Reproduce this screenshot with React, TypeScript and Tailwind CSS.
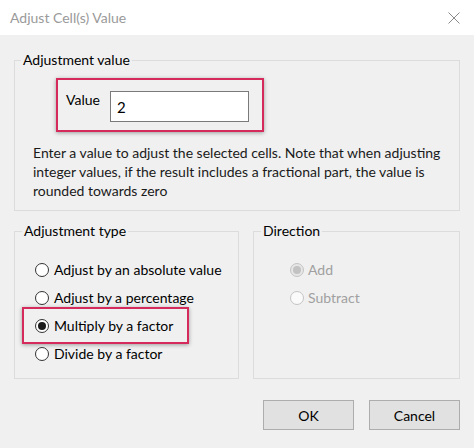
import { useState } from "react";

type Option = { id: string; label: string };

const adjustmentTypes: Option[] = [
  { id: "absolute", label: "Adjust by an absolute value" },
  { id: "percentage", label: "Adjust by a percentage" },
  { id: "multiply", label: "Multiply by a factor" },
  { id: "divide", label: "Divide by a factor" },
];

const directions: Option[] = [
  { id: "add", label: "Add" },
  { id: "subtract", label: "Subtract" },
];

// Classic windows radio button, drawn with plain divs
function Radio({ checked, disabled }: { checked: boolean; disabled?: boolean }) {
  if (disabled) {
    return (
      <span
        className={`flex h-[14px] w-[14px] shrink-0 items-center justify-center rounded-full border border-[#c4c4c4] ${
          checked ? "bg-[#e6e6e6]" : "bg-[#fafafa]"
        }`}
      >
        {checked && <span className="h-[8px] w-[8px] rounded-full bg-[#c2c2c2]" />}
      </span>
    );
  }
  return (
    <span className="flex h-[14px] w-[14px] shrink-0 items-center justify-center rounded-full border border-[#333333] bg-white">
      {checked && <span className="h-[8px] w-[8px] rounded-full bg-[#1a1a1a]" />}
    </span>
  );
}

export default function App() {
  const [value, setValue] = useState("2");
  const [adjustType, setAdjustType] = useState("multiply");
  const direction = "add";

  return (
    <div className="flex h-[448px] w-[474px] flex-col overflow-hidden bg-[#f0f0f0] font-['Lato',sans-serif] text-[14px] text-black">
      {/* Title bar */}
      <div className="flex h-[35px] shrink-0 items-center justify-between bg-white pl-[10px] pr-[14px]">
        <span className="text-[14px] text-[#9a9a9a]">Adjust Cell(s) Value</span>
        <svg width="12" height="12" viewBox="0 0 12 12" className="text-[#8a8a8a]">
          <path d="M0.5 0.5 L11.5 11.5 M11.5 0.5 L0.5 11.5" stroke="currentColor" strokeWidth="1" fill="none" />
        </svg>
      </div>

      <div className="flex flex-col px-[14px] pt-[15px]">
        {/* Adjustment value */}
        <fieldset className="border border-[#dcdcdc] pb-[10px] pl-[18px] pr-[10px]">
          <legend className="ml-[-12px] px-[2px] leading-[20px]">Adjustment value</legend>
          <div className="ml-[23px] mt-[8px] flex h-[54px] w-[208px] items-start border-2 border-[#d42a5c] pl-[8px] pt-[10px] shadow-[0_1px_4px_rgba(0,0,0,0.35)]">
            <label className="leading-[20px]">Value</label>
            <input
              value={value}
              onChange={(e) => setValue(e.target.value)}
              className="ml-[10px] mt-[1px] h-[31px] w-[139px] border border-[#7a7a7a] bg-white pl-[6px] text-[15px] outline-none"
            />
          </div>
          <p className="mt-[11px] whitespace-nowrap leading-[19px] text-[#1a1a1a]">
            Enter a value to adjust the selected cells. Note that when adjusting
            <br />
            integer values, if the result includes a fractional part, the value is
            <br />
            rounded towards zero
          </p>
        </fieldset>

        <div className="mt-[10px] flex gap-[14px]">
          {/* Adjustment type */}
          <fieldset className="h-[158px] w-[225px] border border-[#dcdcdc] pl-[20px]">
            <legend className="ml-[-13px] px-[2px] leading-[20px]">Adjustment type</legend>
            <div className="mt-[15px] flex flex-col">
              {adjustmentTypes.map((opt) => (
                <div
                  key={opt.id}
                  className="relative flex h-[28px] cursor-default items-center gap-[5px] whitespace-nowrap"
                  onClick={() => setAdjustType(opt.id)}
                >
                  <Radio checked={adjustType === opt.id} />
                  <span className="leading-[20px]">{opt.label}</span>
                  {opt.id === "multiply" && (
                    <span className="pointer-events-none absolute left-[-13px] top-[-5px] h-[37px] w-[167px] border-2 border-[#d42a5c] shadow-[0_1px_4px_rgba(0,0,0,0.35)]" />
                  )}
                </div>
              ))}
            </div>
          </fieldset>

          {/* Direction */}
          <fieldset className="h-[158px] w-[207px] border border-[#dcdcdc] pl-[36px]">
            <legend className="ml-[-29px] px-[2px] leading-[20px]">Direction</legend>
            <div className="mt-[15px] flex flex-col">
              {directions.map((opt) => (
                <div key={opt.id} className="flex h-[28px] items-center gap-[4px]">
                  <Radio checked={direction === opt.id} disabled />
                  <span className="leading-[20px] text-[#a0a0a0]">{opt.label}</span>
                </div>
              ))}
            </div>
          </fieldset>
        </div>

        {/* Buttons */}
        <div className="mt-[21px] flex justify-end gap-[15px]">
          <button className="h-[30px] w-[91px] border border-[#adadad] bg-[#e1e1e1]">OK</button>
          <button className="h-[30px] w-[91px] border border-[#adadad] bg-[#e1e1e1]">Cancel</button>
        </div>
      </div>
    </div>
  );
}
